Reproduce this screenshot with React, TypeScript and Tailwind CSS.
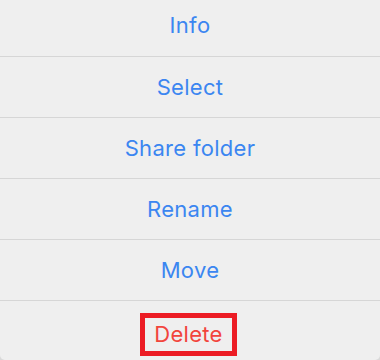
import React from "react";

const actions = ["Select", "Share folder", "Rename", "Move"];

export default function App() {
    return (
        <div className="w-[380px] h-[360px] overflow-hidden bg-[#d9d9d9]">
            <div
                className="h-full flex flex-col bg-[#efefef] rounded-b-[5px] text-[22px] tracking-[0.3px] text-[#3b86f1]"
                style={{ fontFamily: "Inter, 'Liberation Sans', sans-serif" }}
            >
                <div className="h-[57px] shrink-0 flex items-center justify-center pb-[6px] border-b border-[#d6d6d6]">
                    Info
                </div>
                {actions.map((label) => (
                    <div
                        key={label}
                        className="h-[61px] shrink-0 flex items-center justify-center border-b border-[#d6d6d6]"
                    >
                        {label}
                    </div>
                ))}
                <div className="flex-1 flex items-center justify-center pt-[12px] pb-[4px] pr-[3px]">
                    <span className="border-[5px] border-[#ec1c24] w-[97px] h-[43px] flex items-center justify-center text-[#f2443c]">
                        Delete
                    </span>
                </div>
            </div>
        </div>
    );
}
